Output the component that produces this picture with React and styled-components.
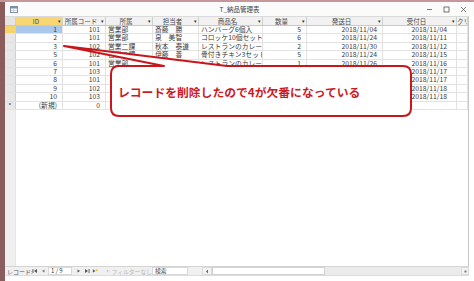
import React from "react";
import styled, { createGlobalStyle } from "styled-components";

const GlobalStyle = createGlobalStyle`
  html, body {
    margin: 0;
    padding: 0;
    background: #ffffff;
  }
  body {
    font-family: "Noto Sans CJK JP", "Noto Sans", sans-serif;
  }
`;

const COLS = "11px 47px 43px 47px 46px 64px 44px 76px 74px 11px";

const columns = [
  { key: "id", label: "ID", align: "right" },
  { key: "code", label: "所属コード", align: "right" },
  { key: "dept", label: "所属", align: "left" },
  { key: "staff", label: "担当者", align: "left" },
  { key: "item", label: "商品名", align: "left" },
  { key: "qty", label: "数量", align: "right" },
  { key: "ship", label: "発送日", align: "right" },
  { key: "recv", label: "受付日", align: "right", pad: 9 },
  { key: "clip", label: "クリッ", align: "left" },
];

// rows 7-10 sit under the callout, so only the columns that peek out are filled
const rows = [
  { id: "1", code: "101", dept: "営業部", staff: "斎藤　勝", item: "ハンバーグ6個入", qty: "5", ship: "2018/11/04", recv: "2018/11/04" },
  { id: "2", code: "101", dept: "営業部", staff: "泉　美智", item: "コロッケ10個セット", qty: "6", ship: "2018/11/24", recv: "2018/11/11" },
  { id: "3", code: "102", dept: "営業二課", staff: "秋本　泰道", item: "レストランのカレー", qty: "2", ship: "2018/11/30", recv: "2018/11/12" },
  { id: "5", code: "102", dept: "営業二課", staff: "伊藤　善", item: "骨付きチキン3セット", qty: "5", ship: "2018/11/24", recv: "2018/11/15" },
  { id: "6", code: "101", dept: "営業部", staff: "斎藤　勝", item: "レストランのカレー", qty: "1", ship: "2018/11/26", recv: "2018/11/16" },
  { id: "7", code: "103", recv: "2018/11/17" },
  { id: "8", code: "101", recv: "2018/11/17" },
  { id: "9", code: "102", recv: "2018/11/18" },
  { id: "10", code: "103", recv: "2018/11/18" },
];

export default function App() {
  return (
    <Page>
      <GlobalStyle />
      <TopStrip />
      <Main>
        <LeftEdge />
        <Window>
          <TitleBar>
            <TableIcon viewBox="0 0 8 7">
              <rect x="0.5" y="0.5" width="7" height="6" fill="#fff" stroke="#7d8fa8" />
              <rect x="0.5" y="0.5" width="7" height="2" fill="#7d8fa8" />
              <line x1="0.5" y1="4.5" x2="7.5" y2="4.5" stroke="#a6b3c4" strokeWidth="0.6" />
              <line x1="3.5" y1="2.5" x2="3.5" y2="6.5" stroke="#a6b3c4" strokeWidth="0.6" />
            </TableIcon>
            <Title>T_納品管理表</Title>
            <Controls>
              <svg width="7" height="7" viewBox="0 0 7 7">
                <line x1="1" y1="3.5" x2="6" y2="3.5" stroke="#555" strokeWidth="0.8" />
              </svg>
              <svg width="7" height="7" viewBox="0 0 7 7">
                <rect x="1" y="1" width="5" height="5" fill="none" stroke="#555" strokeWidth="0.8" />
              </svg>
              <svg width="7" height="7" viewBox="0 0 7 7">
                <path d="M1 1 L6 6 M6 1 L1 6" stroke="#555" strokeWidth="0.8" />
              </svg>
            </Controls>
          </TitleBar>

          <Sheet>
            <HeaderRow>
              <Corner />
              {columns.map((c, i) => (
                <HeaderCell key={c.key} $active={i === 0}>
                  <HeaderLabel>{c.label}</HeaderLabel>
                  {c.key !== "clip" && <SortMark>▾</SortMark>}
                </HeaderCell>
              ))}
            </HeaderRow>

            {rows.map((r, ri) => (
              <Row key={r.id}>
                <Selector $current={ri === 0} />
                {columns.map((c, ci) => (
                  <Cell
                    key={c.key}
                    $align={c.align}
                    $pad={c.pad}
                    $focus={ri === 0 && ci === 0}
                  >
                    {r[c.key] || ""}
                  </Cell>
                ))}
              </Row>
            ))}

            <Row>
              <Selector>*</Selector>
              {columns.map((c) => (
                <Cell key={c.key} $align={c.align} $pad={c.pad}>
                  {c.key === "id" ? "(新規)" : c.key === "code" ? "0" : ""}
                </Cell>
              ))}
            </Row>

            <Empty>
              <EmptySelector />
            </Empty>
          </Sheet>

          <NavBar>
            <NavLabel>レコード:</NavLabel>
            <NavIcon viewBox="0 0 6 6">
              <rect x="0.5" y="1" width="0.9" height="4" fill="#555" />
              <path d="M5 1 L2 3 L5 5 Z" fill="#555" />
            </NavIcon>
            <NavIcon viewBox="0 0 6 6">
              <path d="M4.5 1.5 L2 3 L4.5 4.5 Z" fill="#777" />
            </NavIcon>
            <RecordBox>1 / 9</RecordBox>
            <NavIcon viewBox="0 0 6 6">
              <path d="M1.5 1.5 L4 3 L1.5 4.5 Z" fill="#555" />
            </NavIcon>
            <NavIcon viewBox="0 0 6 6">
              <path d="M1 1 L4 3 L1 5 Z" fill="#555" />
              <rect x="4.6" y="1" width="0.9" height="4" fill="#555" />
            </NavIcon>
            <NavIcon viewBox="0 0 7 6">
              <path d="M1 1 L4 3 L1 5 Z" fill="#555" />
              <path d="M5.5 0.5 L6 1.6 L6.9 1.6 L6.2 2.3 L6.5 3.4 L5.5 2.8 L4.6 3.4 L4.8 2.3 L4.1 1.6 L5 1.6 Z" fill="#e8b820" />
            </NavIcon>
            <FilterGroup>
              <NavIcon viewBox="0 0 7 6">
                <path d="M0.5 0.8 L5.5 0.8 L3.6 3 L3.6 5.4 L2.4 4.8 L2.4 3 Z" fill="#bbb" />
                <path d="M4.8 3.6 L6.6 5.4 M6.6 3.6 L4.8 5.4" stroke="#ccc" strokeWidth="0.6" />
              </NavIcon>
              <FilterText>フィルターなし</FilterText>
            </FilterGroup>
            <SearchBox>検索</SearchBox>
            <NavGap />
            <ScrollButton>
              <svg width="4" height="5" viewBox="0 0 4 5">
                <path d="M3 0.5 L1 2.5 L3 4.5 Z" fill="#666" />
              </svg>
            </ScrollButton>
            <ScrollThumb />
            <ScrollTrack />
            <ScrollButton $small>
              <svg width="3" height="3" viewBox="0 0 3 3">
                <rect x="0.5" y="0.5" width="2" height="2" fill="#777" />
              </svg>
            </ScrollButton>
          </NavBar>
          <Footer />
        </Window>
      </Main>

      <Callout>
        <svg width="352" height="74" viewBox="0 0 352 74">
          <path
            d="M56 21 L101 21 L1 1 L164 21 L340 21 Q348 21 348 29 L348 63 Q348 71 340 71 L56 71 Q48 71 48 63 L48 29 Q48 21 56 21 Z"
            fill="#ffffff"
            stroke="#c8161d"
            strokeWidth="2"
            strokeLinejoin="round"
          />
        </svg>
        <CalloutText>レコードを削除したので4が欠番になっている</CalloutText>
      </Callout>
    </Page>
  );
}

const Page = styled.div`
  position: relative;
  width: 474px;
  height: 281px;
  overflow: hidden;
  display: flex;
  flex-direction: column;
  background: #ffffff;
`;

const TopStrip = styled.div`
  height: 2px;
  background: #c49898;
`;

const Main = styled.div`
  flex: 1;
  display: flex;
  min-height: 0;
`;

const LeftEdge = styled.div`
  width: 5px;
  background: #8a5c5c;
`;

const Window = styled.div`
  flex: 1;
  display: flex;
  flex-direction: column;
  background: #ffffff;
`;

const TitleBar = styled.div`
  height: 14px;
  display: grid;
  grid-template-columns: 1fr auto 1fr;
  align-items: center;
  background: #fbfbfb;
`;

const TableIcon = styled.svg`
  width: 8px;
  height: 7px;
  margin-left: 5px;
`;

const Title = styled.div`
  font-size: 6.5px;
  color: #444;
  line-height: 14px;
`;

const Controls = styled.div`
  justify-self: end;
  display: flex;
  align-items: center;
  gap: 10px;
  margin-right: 7px;
`;

const Sheet = styled.div`
  flex: 1;
  width: 463px;
  display: flex;
  flex-direction: column;
  border-right: 1px solid #c8c8c8;
  border-top: 1px solid #dadada;
  min-height: 0;
`;

const HeaderRow = styled.div`
  display: grid;
  grid-template-columns: ${COLS};
  height: 9px;
  box-sizing: border-box;
  background: #f1f1f1;
  border-bottom: 1px solid #c9c9c9;
`;

const Corner = styled.div`
  background: #e4e4e4;
  border-right: 1px solid #cfcfcf;
`;

const HeaderCell = styled.div`
  display: flex;
  align-items: center;
  overflow-x: clip;
  white-space: nowrap;
  background: ${(p) => (p.$active ? "#f8d672" : "transparent")};
  border-right: 1px solid #cfcfcf;
  color: #4a4a4a;
  font-size: 6.5px;
  line-height: 8px;
`;

const HeaderLabel = styled.span`
  flex: 1;
  text-align: center;
`;

const SortMark = styled.span`
  width: 6px;
  font-size: 4.5px;
  color: #333;
  text-align: center;
`;

const Row = styled.div`
  display: grid;
  grid-template-columns: ${COLS};
  height: 8.4px;
  box-sizing: border-box;
  border-bottom: 1px solid #e2e2e2;
`;

const Selector = styled.div`
  background: ${(p) => (p.$current ? "#f6d46a" : "#e7e7e7")};
  border-right: 1px solid #cfcfcf;
  font-size: 6px;
  line-height: 7.4px;
  color: #333;
  text-align: center;
`;

const Cell = styled.div`
  overflow-x: clip;
  white-space: nowrap;
  text-align: ${(p) => p.$align};
  padding: ${(p) => (p.$align === "right" ? `0 ${p.$pad || 5}px 0 0` : "0 0 0 2px")};
  background: ${(p) => (p.$focus ? "#a9c8ec" : "#ffffff")};
  border-right: 1px solid #e2e2e2;
  color: #3a3a3a;
  font-size: 6.8px;
  line-height: 7.4px;
`;

const Empty = styled.div`
  flex: 1;
  display: flex;
`;

const EmptySelector = styled.div`
  width: 11px;
  background: #efefef;
  border-right: 1px solid #e6e6e6;
  box-sizing: border-box;
`;

const NavBar = styled.div`
  height: 10px;
  width: 464px;
  display: flex;
  align-items: center;
  box-sizing: border-box;
  background: #f0f0f0;
  border-top: 1px solid #d4d4d4;
  border-bottom: 1px solid #dcdcdc;
  font-size: 6px;
  color: #555;
`;

const NavLabel = styled.span`
  margin-left: 2px;
  width: 25px;
  white-space: nowrap;
`;

const NavIcon = styled.svg`
  width: 6px;
  height: 6px;
  margin-right: 2px;
`;

const RecordBox = styled.div`
  width: 24px;
  height: 8px;
  box-sizing: border-box;
  background: #ffffff;
  border: 1px solid #d8d8d8;
  font-size: 6px;
  line-height: 6px;
  padding-left: 2px;
  color: #333;
  margin: 0 4px 0 0;
`;

const FilterGroup = styled.div`
  display: flex;
  align-items: center;
  width: 46px;
  margin-left: 6px;
`;

const FilterText = styled.span`
  color: #b4b4b4;
  white-space: nowrap;
  font-size: 5.8px;
`;

const SearchBox = styled.div`
  width: 36px;
  height: 8px;
  box-sizing: border-box;
  background: #ffffff;
  border: 1px solid #d8d8d8;
  padding-left: 2px;
  font-size: 5.8px;
  line-height: 6px;
  color: #444;
`;

const NavGap = styled.div`
  width: 14px;
`;

const ScrollButton = styled.div`
  width: ${(p) => (p.$small ? 8 : 10)}px;
  height: 8px;
  display: flex;
  align-items: center;
  justify-content: center;
  background: #f4f4f4;
  border: 1px solid #dadada;
  box-sizing: border-box;
`;

const ScrollThumb = styled.div`
  width: 113px;
  height: 8px;
  box-sizing: border-box;
  background: #ffffff;
  border: 1px solid #d0d0d0;
`;

const ScrollTrack = styled.div`
  flex: 1;
  height: 8px;
  background: #ebebeb;
`;

const Footer = styled.div`
  flex: 0 0 5px;
  background: #ffffff;
`;

const Callout = styled.div`
  position: absolute;
  left: 63px;
  top: 45px;
  width: 352px;
  height: 74px;

  svg {
    display: block;
  }
`;

const CalloutText = styled.div`
  position: absolute;
  left: 55px;
  top: 21px;
  height: 50px;
  display: flex;
  align-items: center;
  white-space: nowrap;
  font-size: 11.8px;
  font-weight: 700;
  color: #cc1a1f;
  letter-spacing: 0;
`;
